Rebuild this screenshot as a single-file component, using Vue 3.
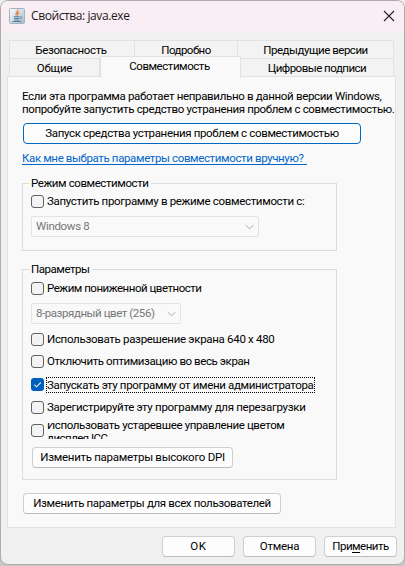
<template>
  <div class="desktop">
    <div class="window">
      <header class="titlebar">
        <svg class="app-icon" width="16" height="16" viewBox="0 0 16 16">
          <defs>
            <linearGradient id="tile" x1="0" y1="0" x2="1" y2="1">
              <stop offset="0" stop-color="#fafcfd" />
              <stop offset="1" stop-color="#a9bccb" />
            </linearGradient>
          </defs>
          <rect x=".5" y=".5" width="15" height="15" rx="1" fill="url(#tile)" stroke="#a4b2bf" />
          <path d="M8.6 1.5C9.8 3.4 5.8 4.3 7.3 7.6M10.2 4C8.2 5 8.2 5.8 8.8 7.4" fill="none" stroke="#ea7b3c" stroke-width="1.2" />
          <path d="M4.7 8.7h6M5 10.4h5.4M5.3 12h4.8M3.3 13.5h9M11.2 8.7c2.2-.3 1.8 2-.2 2.3" fill="none" stroke="#54809f" />
        </svg>
        <span v-fit="98" class="title">Свойства: java.exe</span>
        <svg class="close" width="12" height="12" viewBox="0 0 12 12">
          <path d="M1 1l10 10M11 1L1 11" fill="none" stroke="#222" stroke-width="1.1" />
        </svg>
      </header>

      <nav class="tabs">
        <div class="tab-row upper">
          <div class="tab t1"><span v-fit="71">Безопасность</span></div>
          <div class="tab t2"><span v-fit="49">Подробно</span></div>
          <div class="tab t3"><span v-fit="104">Предыдущие версии</span></div>
        </div>
        <div class="tab-row">
          <div class="tab b1"><span v-fit="35">Общие</span></div>
          <div class="tab active"><span v-fit="80">Совместимость</span></div>
          <div class="tab b3"><span v-fit="98">Цифровые подписи</span></div>
        </div>
      </nav>

      <main class="panel">
        <p class="intro">
          <span v-fit="359">Если эта программа работает неправильно в данной версии Windows,</span>
          <span v-fit="372">попробуйте запустить средство устранения проблем с совместимостью.</span>
        </p>
        <button class="btn primary"><span v-fit="293">Запуск средства устранения проблем с совместимостью</span></button>
        <a class="help"><span v-fit="281">Как мне выбрать параметры совместимости вручную?</span></a>

        <section class="group mode">
          <div class="legend"><span v-fit="117">Режим совместимости</span></div>
          <label class="check">
            <i class="box"></i><span v-fit="257">Запустить программу в режиме совместимости с:</span>
          </label>
          <div class="select wide">
            <span v-fit="53">Windows 8</span>
            <svg width="9" height="6" viewBox="0 0 9 6"><path d="M.7 1l3.8 3.8L8.3 1" /></svg>
          </div>
        </section>

        <section class="group options">
          <div class="legend"><span v-fit="58">Параметры</span></div>
          <label class="check">
            <i class="box"></i><span v-fit="154">Режим пониженной цветности</span>
          </label>
          <div class="select">
            <span v-fit="118">8-разрядный цвет (256)</span>
            <svg width="9" height="6" viewBox="0 0 9 6"><path d="M.7 1l3.8 3.8L8.3 1" /></svg>
          </div>
          <div class="list">
            <label v-for="item in options" :key="item.text" class="check" :class="{ focused: item.checked }">
              <i class="box" :class="{ on: item.checked }">
                <svg v-if="item.checked" width="13" height="13" viewBox="0 0 13 13"><path d="M3.3 6.6l2.2 2.2 4.3-4.3" /></svg>
              </i>
              <span v-fit="item.width">{{ item.text }}</span>
            </label>
            <label class="check">
              <i class="box"></i>
              <div class="clipped">
                <span v-fit="237">Использовать устаревшее управление цветом</span>
                <span v-fit="60">дисплея ICC</span>
              </div>
            </label>
          </div>
          <button class="btn dpi"><span v-fit="184">Изменить параметры высокого DPI</span></button>
        </section>

        <button class="btn all-users"><span v-fit="237">Изменить параметры для всех пользователей</span></button>
      </main>

      <footer class="actions">
        <button class="btn"><span v-fit="16">OK</span></button>
        <button class="btn"><span v-fit="39">Отмена</span></button>
        <button class="btn"><span v-fit="56">При<u>м</u>енить</span></button>
      </footer>
    </div>
  </div>
</template>

<script setup>
const options = [
  { text: 'Использовать разрешение экрана 640 x 480', width: 227, checked: false },
  { text: 'Отключить оптимизацию во весь экран', width: 202, checked: false },
  { text: 'Запускать эту программу от имени администратора', width: 266, checked: true },
  { text: 'Зарегистрируйте эту программу для перезагрузки', width: 258, checked: false }
];

// spreads the letters so that the label takes the given width
const vFit = {
  mounted(el, { value }) {
    const natural = el.getBoundingClientRect().width;
    const gap = (value + 0.5 - natural) / el.textContent.length;
    el.style.letterSpacing = `${gap}px`;
  }
};
</script>

<style>
body { margin: 0; overflow: hidden; }
</style>

<style scoped>
* { box-sizing: border-box; }
.desktop { width: 405px; height: 566px; padding: 0 0 1px; background: linear-gradient(#eee, #b5b3b4 35%, #b0aeae 80%, #c8c8c8); font-family: Roboto, "Noto Sans", sans-serif; font-size: 11.5px; line-height: 13px; color: #000; }
.desktop span { white-space: nowrap; flex: none; }
.window { height: 565px; border: 1px solid #adabac; border-radius: 8px; background: #f0f0f0; overflow: hidden; display: flex; flex-direction: column; }

.titlebar { height: 30px; flex: none; display: flex; align-items: center; padding: 0 9px 0 8px; background: #f9eef4; }
.title { margin-left: 6px; font-family: "Open Sans", "Noto Sans", sans-serif; font-size: 12px; line-height: 16px; color: #1a1a1a; }
.close { margin-left: auto; }

.tabs { padding: 9px 10px 0 8px; flex: none; height: 45px; }
.tab-row { display: flex; height: 18px; }
.tab { border: 1px solid #e2e2e2; border-bottom: 0; border-left-width: 0; background: #f3f3f3; display: flex; justify-content: center; padding-top: 3px; }
.t1, .b1 { border-left-width: 1px; }
.t1 { width: 126px; padding-right: 2px; }
.t2 { width: 103px; }
.t3 { width: 156px; }
.b1 { width: 91px; }
.b3 { width: 153px; }
.active { width: 141px; height: 22px; margin-top: -2px; background: #f9f9f9; z-index: 1; position: relative; border-left-width: 1px; padding-right: 2px; }

.panel { margin: 0 8px 0 6px; height: 452px; flex: none; border: 1px solid #e2e2e2; background: #f9f9f9; padding: 13px 0 0 14px; display: flex; flex-direction: column; align-items: flex-start; }
.intro { margin: 0; display: flex; flex-direction: column; align-items: flex-start; }
.btn { height: 21px; padding: 0; border: 1px solid #cfcfcf; border-bottom-color: #bbb; border-radius: 4px; background: #fdfdfd; font: inherit; color: #000; display: flex; align-items: center; justify-content: center; flex: none; }
.btn u { text-underline-offset: 2px; }
.primary { width: 338px; margin: 7px 0 0 1px; height: 21px; border-color: #0067c0; }
.help { margin-top: 8px; padding-right: 3px; border-bottom: 1px solid #0066cc; color: #0066cc; height: 13px; line-height: 13px; }

.group { width: 315px; border: 1px solid #dcdcdc; padding: 0 0 0 8px; display: flex; flex-direction: column; align-items: flex-start; flex: none; }
.legend { margin: -7px 0 0 -2px; padding: 0 2px; background: #f9f9f9; height: 13px; }
.mode { margin-top: 18px; height: 68px; }
.options { margin-top: 18px; height: 211px; }
.check { display: flex; align-items: center; height: 15px; }
.mode > .check { margin-top: 4px; }
.options > .check { margin-top: 5px; }
.box { width: 13px; height: 13px; flex: none; border: 1px solid #626262; border-radius: 3px; background: #f3f3f3; margin-right: 3px; }
.box.on { background: #005fb8; border: 0; }
.box svg { display: block; fill: none; stroke: #dbe9f5; stroke-width: 1.1; }
.focused span { outline: 1px dotted #000; outline-offset: 0; line-height: 14px; }
.select { width: 150px; height: 21px; margin-top: 7px; padding: 0 4px; display: flex; align-items: center; justify-content: space-between; border: 1px solid #e3e3e3; border-radius: 2px; color: #777; }
.select svg { fill: none; stroke: #aaa; }
.wide { width: 228px; margin-top: 7px; }
.list { display: flex; flex-direction: column; gap: 8px; margin-top: 8px; }
.list .check:nth-child(2) { margin-top: -1px; }
.clipped { height: 16px; overflow: hidden; display: flex; flex-direction: column; align-items: flex-start; }
.clipped span { position: relative; top: -4px; }
.dpi { width: 201px; margin: 9px 0 0 1px; }
.all-users { width: 258px; margin: 13px 0 0 1px; }

.actions { display: flex; justify-content: flex-end; gap: 8px; padding: 8px 7px 0 0; }
.actions .btn { width: 73px; }
</style>
